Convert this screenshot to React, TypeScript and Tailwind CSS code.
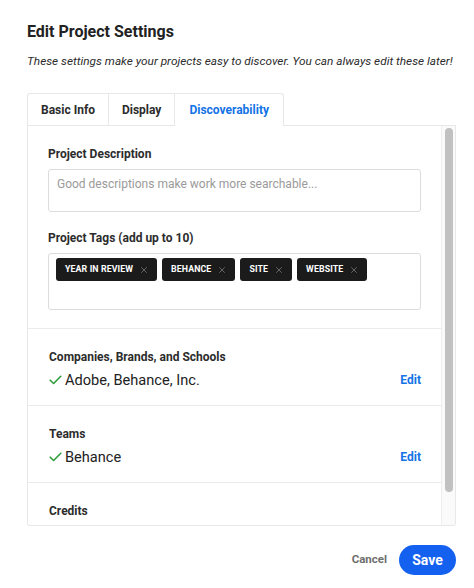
import { X } from "lucide-react";

const tags = ["YEAR IN REVIEW", "BEHANCE", "SITE", "WEBSITE"];

const Check = () => (
  <svg width="13" height="10" viewBox="0 0 13 10" fill="none" className="shrink-0">
    <path d="M1.2 5.2 L4.6 8.5 L11.8 1.3" stroke="#2d9d3a" strokeWidth="1.6" strokeLinecap="round" strokeLinejoin="round" />
  </svg>
);

const Linked = ({ label, value }: { label: string; value: string }) => (
  <div className="border-b border-[#ebebeb] pl-[21px] pr-[20px] pt-[20px] pb-[14px]">
    <div className="text-[12px] font-bold leading-[16px] text-[#2c2c2c]">{label}</div>
    <div className="mt-[4px] flex items-center justify-between">
      <div className="flex items-center gap-[3px]">
        <Check />
        <span className="text-[14.6px] leading-[22px] text-[#222]">{value}</span>
      </div>
      <button type="button" className="text-[12px] font-bold text-[#1473e6]">Edit</button>
    </div>
  </div>
);

export default function App() {
  return (
    <div className="min-h-[588px] w-[474px] bg-white pl-[27px] pr-[18px] pt-[22px] font-['Roboto',Arial,sans-serif] text-[#2c2c2c]">
      <h1 className="text-[16px] font-bold leading-[20px] text-[#222]">Edit Project Settings</h1>
      <p className="mt-[11px] whitespace-nowrap text-[11.8px] italic leading-[16px] text-[#2c2c2c]">
        These settings make your projects easy to discover. You can always edit these later!
      </p>

      <div className="mt-[24px] flex">
        <div className="flex h-[33px] items-center border-t border-l border-b border-[#e8e8e8] px-[13px] text-[12px] font-bold text-[#2c2c2c] rounded-tl-[3px]">
          Basic Info
        </div>
        <div className="flex h-[33px] items-center border-t border-l border-b border-[#e8e8e8] px-[13px] text-[12px] font-bold text-[#2c2c2c]">
          Display
        </div>
        <div className="flex h-[33px] items-center border-t border-l border-r border-[#e8e8e8] px-[14px] text-[12px] font-bold text-[#1473e6] rounded-tr-[3px]">
          Discoverability
        </div>
        <div className="flex-1 border-b border-[#e8e8e8]" />
      </div>

      <div className="flex h-[400px] overflow-hidden rounded-b-[3px] border-x border-b border-[#e8e8e8]">
        <div className="flex-1 overflow-hidden">
          <div className="border-b border-[#ebebeb] pl-[20px] pr-[20px] pt-[20px] pb-[18px]">
            <div className="text-[12px] font-bold leading-[16px]">Project Description</div>
            <div className="mt-[7px] h-[43px] rounded-[3px] border border-[#dcdcdc] px-[8px] pt-[6px] text-[12px] leading-[16px] text-[#9a9a9a]">
              Good descriptions make work more searchable...
            </div>
            <div className="mt-[18px] text-[12px] font-bold leading-[16px]">Project Tags (add up to 10)</div>
            <div className="mt-[7px] flex h-[57px] items-start gap-[5px] rounded-[3px] border border-[#dcdcdc] px-[7px] pt-[4px]">
              {tags.map((t) => (
                <span key={t} className="flex h-[23px] items-center gap-[6px] rounded-[3px] bg-[#1b1b1b] pl-[9px] pr-[8px] text-[8.8px] font-bold tracking-[0.1px] text-white">
                  {t}
                  <X size={10} strokeWidth={1.6} className="text-[#8a8a8a]" />
                </span>
              ))}
            </div>
          </div>
          <Linked label="Companies, Brands, and Schools" value="Adobe, Behance, Inc." />
          <Linked label="Teams" value="Behance" />
          <div className="pl-[21px] pt-[20px]">
            <div className="text-[12px] font-bold leading-[16px]">Credits</div>
          </div>
        </div>
        <div className="w-[14px] border-l border-[#eeeeee] bg-[#fafafa] pt-[2px]">
          <div className="mx-auto h-[364px] w-[8px] rounded-full bg-[#c1c1c1]" />
        </div>
      </div>

      <div className="mt-[19px] flex items-center justify-end gap-[12px]">
        <button type="button" className="text-[11.5px] font-bold text-[#6e6e6e]">Cancel</button>
        <button type="button" className="h-[30px] w-[57px] rounded-full bg-[#1461f0] text-[14px] font-bold text-white">
          Save
        </button>
      </div>
    </div>
  );
}
